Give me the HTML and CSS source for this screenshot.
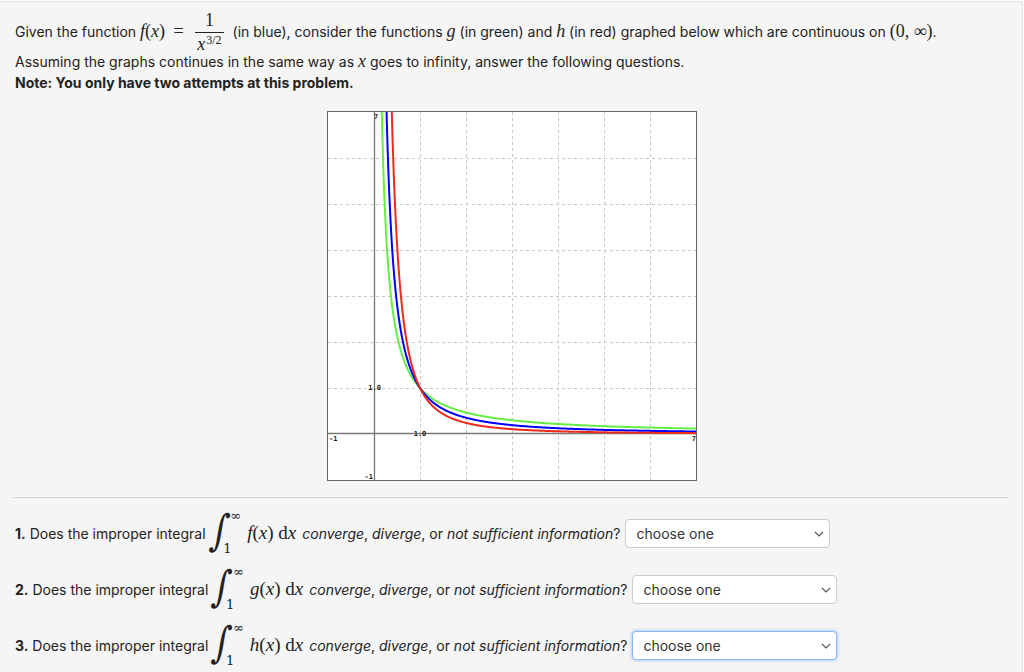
FILE: index.html
```html
<!DOCTYPE html>
<html lang="en">
<head>
    <meta charset="UTF-8">
    <title>Improper Integrals</title>
    <link rel="stylesheet" href="styles.css">
</head>
<body>
    <div class="problem">
        <p class="intro">
            Given the function
            <span class="math"><i>f</i>(<i>x</i>) <span class="rel">=</span> <span class="frac"><span class="num">1</span><span class="den"><i>x</i><sup>3/2</sup></span></span></span>
            (in blue), consider the functions <i class="mv">g</i> (in green) and <i class="mv">h</i> (in red) graphed below which are continuous on <span class="math">(0, ∞)</span>.
            <br>
            Assuming the graphs continues in the same way as <i class="mv">x</i> goes to infinity, answer the following questions.
            <br>
            <b>Note: You only have two attempts at this problem.</b>
        </p>

        <div class="graph">
            <svg id="plot" width="370" height="370" viewBox="0 0 370 370">
                <rect x="0.5" y="0.5" width="369" height="369" fill="#fff" stroke="#666"/>
                <g id="grid" stroke="#c8c8c8" stroke-dasharray="3,3" stroke-width="1"></g>
                <line x1="47.5" y1="1" x2="47.5" y2="369" stroke="#777" stroke-width="1.3"/>
                <line x1="1" y1="322.5" x2="369" y2="322.5" stroke="#777" stroke-width="1.3"/>
                <g class="labels">
                    <text x="47" y="8">7</text>
                    <text x="54" y="279" text-anchor="end">1.0</text>
                    <text x="93" y="325" text-anchor="middle">1.0</text>
                    <text x="2" y="330">-1</text>
                    <text x="369" y="330" text-anchor="end">7</text>
                    <text x="46" y="368" text-anchor="end">-1</text>
                </g>
                <defs>
                    <clipPath id="area"><rect x="1" y="1" width="368" height="368"/></clipPath>
                </defs>
                <g clip-path="url(#area)" fill="none" stroke-width="2">
                    <path id="curveG" stroke="#66ee44"/>
                    <path id="curveF" stroke="#0000ff"/>
                    <path id="curveH" stroke="#ee2a1c"/>
                </g>
            </svg>
        </div>

        <hr class="divider">

        <div class="question first">
            <span class="q-text"><b>1.</b> Does the improper integral</span>
            <span class="integral"><span class="int-sign">∫</span><span class="limits"><span class="upper">∞</span><span class="lower">1</span></span></span>
            <span class="math"><i>f</i>(<i>x</i>) d<i>x</i></span>
            <span class="q-text"><em>converge</em>, <em>diverge</em>, or <em>not sufficient information</em>?</span>
            <span class="select-wrap">
                <select><option>choose one</option><option>converges</option><option>diverges</option><option>not sufficient information</option></select>
                <svg class="chevron" width="10" height="6" viewBox="0 0 10 6"><path d="M1 1l4 4 4-4" fill="none" stroke="#555" stroke-width="1.2"/></svg>
            </span>
        </div>

        <div class="question">
            <span class="q-text"><b>2.</b> Does the improper integral</span>
            <span class="integral"><span class="int-sign">∫</span><span class="limits"><span class="upper">∞</span><span class="lower">1</span></span></span>
            <span class="math"><i>g</i>(<i>x</i>) d<i>x</i></span>
            <span class="q-text"><em>converge</em>, <em>diverge</em>, or <em>not sufficient information</em>?</span>
            <span class="select-wrap">
                <select><option>choose one</option><option>converges</option><option>diverges</option><option>not sufficient information</option></select>
                <svg class="chevron" width="10" height="6" viewBox="0 0 10 6"><path d="M1 1l4 4 4-4" fill="none" stroke="#555" stroke-width="1.2"/></svg>
            </span>
        </div>

        <div class="question">
            <span class="q-text"><b>3.</b> Does the improper integral</span>
            <span class="integral"><span class="int-sign">∫</span><span class="limits"><span class="upper">∞</span><span class="lower">1</span></span></span>
            <span class="math"><i>h</i>(<i>x</i>) d<i>x</i></span>
            <span class="q-text"><em>converge</em>, <em>diverge</em>, or <em>not sufficient information</em>?</span>
            <span class="select-wrap focused">
                <select><option>choose one</option><option>converges</option><option>diverges</option><option>not sufficient information</option></select>
                <svg class="chevron" width="10" height="6" viewBox="0 0 10 6"><path d="M1 1l4 4 4-4" fill="none" stroke="#555" stroke-width="1.2"/></svg>
            </span>
        </div>
    </div>

    <script src="graph.js"></script>
</body>
</html>
```

FILE: styles.css
```css
* {
    margin: 0;
    padding: 0;
    box-sizing: border-box;
}

body {
    font-family: Inter, "Liberation Sans", sans-serif;
    font-size: 14px;
    color: #222;
    background: #fff;
    overflow: hidden;
}

.problem {
    background: #f5f5f5;
    border: 1px solid #e2e2e2;
    border-radius: 4px;
    box-shadow: 0 0 2px rgba(0,0,0,0.06);
    margin: 1px 1px 0 -2px;
    padding: 12px 14px 20px 16px;
    height: 700px;
}

.intro {
    line-height: 21px;
}

.math {
    font-family: "Liberation Serif", serif;
    font-size: 18px;
}

.math i, .mv {
    font-family: "Liberation Serif", serif;
    font-size: 18px;
    font-style: italic;
}

.rel {
    margin: 0 4px;
}

.frac {
    display: inline-flex;
    flex-direction: column;
    align-items: center;
    vertical-align: middle;
    margin: -3px 5px -2px 3px;
    line-height: 1;
}

.frac .num {
    padding: 0 2px 3px;
    border-bottom: 1px solid #222;
    width: 100%;
    text-align: center;
}

.frac .den {
    padding: 2px 2px 0;
}

.frac sup {
    font-size: 12px;
    font-style: normal;
    vertical-align: 6px;
    line-height: 0;
    margin-left: 1px;
}

.graph {
    display: flex;
    justify-content: center;
    margin-top: 18px;
}

#plot {
    display: block;
}

.labels text {
    font-family: "DejaVu Sans Mono", monospace;
    font-size: 7px;
    font-weight: bold;
    fill: #222;
}

.divider {
    border: none;
    border-top: 1px solid #d4d4d4;
    margin: 16px 0 0 -2px;
    width: 996px;
}

.question {
    display: flex;
    align-items: center;
    height: 56px;
}

.question.first {
    margin-top: 7px;
}

.q-text em {
    font-style: italic;
}

.integral {
    display: inline-flex;
    align-items: stretch;
    margin: 0 4px 0 5px;
    height: 44px;
}

.int-sign {
    font-family: "DejaVu Serif", serif;
    font-size: 34px;
    line-height: 44px;
    transform: translateY(-3px) scaleY(1.25) skewX(-10deg);
    display: inline-block;
}

.limits {
    display: flex;
    flex-direction: column;
    justify-content: space-between;
    font-family: "DejaVu Serif", serif;
    font-size: 13px;
    line-height: 1;
}

.limits .upper {
    margin-left: 2px;
    margin-top: -2px;
}

.limits .lower {
    margin-left: -5px;
}

.question .math {
    margin: 0 6px 0 2px;
    font-size: 19px;
}

.question .math i {
    font-size: 19px;
}

.select-wrap {
    position: relative;
    margin-left: 5px;
}

.select-wrap select {
    appearance: none;
    -webkit-appearance: none;
    width: 205px;
    height: 29px;
    border: 1px solid #ccc;
    border-radius: 4px;
    background: #fff;
    font-family: inherit;
    font-size: 14px;
    color: #333;
    padding: 0 10px;
    display: block;
}

.select-wrap.focused select {
    border-color: #8ab8f0;
    box-shadow: 0 0 3px 1px rgba(100,160,240,0.45);
    outline: none;
}

.chevron {
    position: absolute;
    right: 6px;
    top: 12px;
}
```

FILE: graph.js
```js
// plot window is x, y in [-1, 7], 46px per unit, 1px frame
var UNIT = 46;
function px(x) { return 1 + (x + 1) * UNIT; }
function py(y) { return 1 + (7 - y) * UNIT; }

var grid = document.getElementById('grid');
for (var i = 1; i <= 6; i++) {
    var gx = Math.round(px(i)) + 0.5;
    var gy = Math.round(py(i)) + 0.5;
    grid.innerHTML += '<line x1="' + gx + '" y1="1" x2="' + gx + '" y2="369"/>';
    grid.innerHTML += '<line x1="1" y1="' + gy + '" x2="369" y2="' + gy + '"/>';
}

function curve(id, p) {
    var start = Math.pow(7.5, -1 / p);
    var d = '';
    for (var t = 0; t <= 400; t++) {
        var x = start * Math.pow(7 / start, t / 400);
        var y = Math.pow(x, -p);
        d += (t ? 'L' : 'M') + px(x).toFixed(2) + ' ' + py(y).toFixed(2);
    }
    document.getElementById(id).setAttribute('d', d);
}

curve('curveG', 1.1);
curve('curveF', 1.5);
curve('curveH', 2.05);
```
